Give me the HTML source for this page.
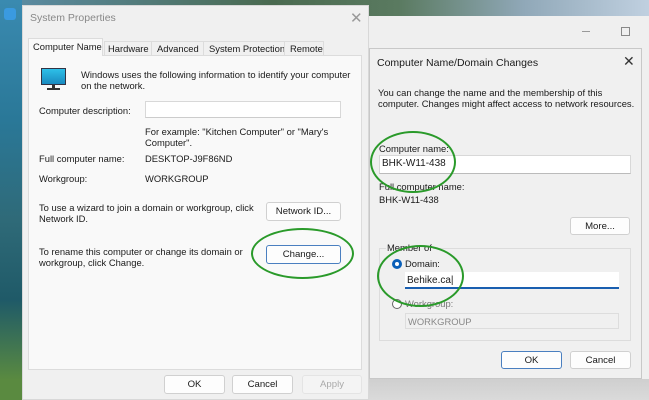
<!DOCTYPE html>
<html><head><style>
*{box-sizing:border-box;margin:0;padding:0}
body{width:649px;height:400px;overflow:hidden;position:relative;font-family:"Liberation Sans",sans-serif;font-size:9.4px;color:#1a1a1a;background:linear-gradient(90deg,#2d7a9a,#4a8fb0 30%,#6a8a70 60%,#8aa0b0 80%,#b8c8d8)}
.a{position:absolute}
.t{position:absolute;white-space:nowrap}
.btn{position:absolute;background:#fdfdfd;border:1px solid #d0d0d0;border-radius:3px;text-align:center;line-height:17px;font-size:9.6px}
.inp{position:absolute;background:#fff;border:1px solid #d8d8d8;border-bottom:1px solid #9a9a9a}
.ell{position:absolute;border:2.5px solid #2a9a2a;border-radius:50%}
</style></head><body>
<div class="a" style="left:0;top:0;width:22px;height:400px;background:linear-gradient(180deg,#3a8ab0,#2a7898 30%,#2f6a78 55%,#1f5a68 75%,#5a8a40 95%)"></div>
<div class="a" style="left:4px;top:8px;width:12px;height:12px;background:#3a9ae0;border-radius:3px"></div>
<div class="a" style="left:22px;top:0;width:627px;height:16px;background:linear-gradient(90deg,#5a8aa0,#4a6a50 40%,#5a7a60 60%,#90a8b8 80%,#c0d0e0)"></div>
<div class="a" style="left:366px;top:16px;width:283px;height:384px;background:#efefef"></div>
<div class="a" style="left:582px;top:31px;width:8px;height:1px;background:#999"></div>
<div class="a" style="left:621px;top:27px;width:9px;height:9px;border:1px solid #888"></div>
<div class="a" style="left:22px;top:5px;width:347px;height:395px;background:#f0f0f0;border:1px solid #d8d8d8"></div>
<div class="t" style="left:30px;top:12px;font-size:10.5px;color:#888">System Properties</div>
<div class="t" style="left:350px;top:9px;font-size:15px;color:#999">✕</div>
<div class="a" style="left:28px;top:55px;width:334px;height:315px;background:#f9f9f9;border:1px solid #dcdcdc"></div>
<div class="a" style="left:28px;top:38px;width:75px;height:18px;background:#f9f9f9;border:1px solid #dcdcdc;border-bottom:none"></div>
<div class="t" style="left:33px;top:41px">Computer Name</div>
<div class="a" style="left:104px;top:41px;width:220px;height:14px;background:#f0f0f0;border:1px solid #dcdcdc;border-bottom:none"></div>
<div class="t" style="left:108px;top:43px">Hardware</div>
<div class="a" style="left:151px;top:41px;width:1px;height:14px;background:#dcdcdc"></div>
<div class="t" style="left:157px;top:43px">Advanced</div>
<div class="a" style="left:203px;top:41px;width:1px;height:14px;background:#dcdcdc"></div>
<div class="t" style="left:209px;top:43px">System Protection</div>
<div class="a" style="left:284px;top:41px;width:1px;height:14px;background:#dcdcdc"></div>
<div class="t" style="left:290px;top:43px">Remote</div>
<div class="a" style="left:41px;top:68px;width:25px;height:17px;background:linear-gradient(#2ec0e8,#1a8ac0);border:1px solid #334"></div>
<div class="a" style="left:52px;top:85px;width:3px;height:3px;background:#333"></div>
<div class="a" style="left:47px;top:88px;width:13px;height:2px;background:#333"></div>
<div class="t" style="left:81px;top:69px;line-height:11px">Windows uses the following information to identify your computer<br>on the network.</div>
<div class="t" style="left:39px;top:105px">Computer description:</div>
<div class="inp" style="left:145px;top:101px;width:196px;height:17px;border-bottom-color:#ccc"></div>
<div class="t" style="left:145px;top:126px;line-height:11px">For example: "Kitchen Computer" or "Mary's<br>Computer".</div>
<div class="t" style="left:39px;top:153px">Full computer name:</div>
<div class="t" style="left:145px;top:153px">DESKTOP-J9F86ND</div>
<div class="t" style="left:39px;top:173px">Workgroup:</div>
<div class="t" style="left:145px;top:173px">WORKGROUP</div>
<div class="t" style="left:39px;top:202px;line-height:11px">To use a wizard to join a domain or workgroup, click<br>Network ID.</div>
<div class="btn" style="left:266px;top:202px;width:75px;height:19px">Network ID...</div>
<div class="t" style="left:39px;top:246px;line-height:11px">To rename this computer or change its domain or<br>workgroup, click Change.</div>
<div class="btn" style="left:266px;top:245px;width:75px;height:19px;border-color:#4a7fc0">Change...</div>
<div class="ell" style="left:251px;top:228px;width:103px;height:51px"></div>
<div class="btn" style="left:164px;top:375px;width:61px;height:19px">OK</div>
<div class="btn" style="left:232px;top:375px;width:61px;height:19px">Cancel</div>
<div class="btn" style="left:302px;top:375px;width:60px;height:19px;color:#aaa;background:#f4f4f4;border-color:#e4e4e4">Apply</div>
<div class="a" style="left:369px;top:379px;width:280px;height:21px;background:linear-gradient(#cfcfcf,#dadada)"></div>
<div class="a" style="left:369px;top:48px;width:273px;height:331px;background:#f0f0f0;border:1px solid #c8c8c8"></div>
<div class="t" style="left:377px;top:57px;font-size:10.5px">Computer Name/Domain Changes</div>
<div class="t" style="left:623px;top:53px;font-size:14px;color:#333">✕</div>
<div class="t" style="left:378px;top:87px;line-height:11px">You can change the name and the membership of this<br>computer. Changes might affect access to network resources.</div>
<div class="t" style="left:379px;top:143px">Computer name:</div>
<div class="inp" style="left:379px;top:155px;width:252px;height:19px;border-bottom-color:#bbb"></div>
<div class="t" style="left:382px;top:158px;font-size:10px">BHK-W11-438</div>
<div class="t" style="left:379px;top:181px">Full computer name:</div>
<div class="t" style="left:379px;top:194px">BHK-W11-438</div>
<div class="btn" style="left:570px;top:217px;width:60px;height:18px">More...</div>
<div class="a" style="left:379px;top:248px;width:252px;height:93px;border:1px solid #dcdcdc"></div>
<div class="t" style="left:386px;top:242px;background:#f0f0f0;padding:0 1px">Member of</div>
<div class="a" style="left:392px;top:259px;width:10px;height:10px;border-radius:50%;border:3px solid #0a5fb8;background:#fff"></div>
<div class="t" style="left:405px;top:258px">Domain:</div>
<div class="a" style="left:405px;top:272px;width:214px;height:17px;background:#fff;border-bottom:2px solid #1a5fb0"></div>
<div class="t" style="left:407px;top:275px;font-size:10px">Behike.ca|</div>
<div class="a" style="left:392px;top:299px;width:10px;height:10px;border-radius:50%;border:1px solid #666;background:#fff"></div>
<div class="t" style="left:405px;top:298px;color:#777">Workgroup:</div>
<div class="a" style="left:405px;top:313px;width:214px;height:16px;background:#f0f0f0;border:1px solid #ddd"></div>
<div class="t" style="left:408px;top:316px;color:#888">WORKGROUP</div>
<div class="btn" style="left:501px;top:351px;width:61px;height:18px;border-color:#4a7fc0">OK</div>
<div class="btn" style="left:570px;top:351px;width:61px;height:18px">Cancel</div>
<div class="ell" style="left:370px;top:131px;width:86px;height:62px"></div>
<div class="ell" style="left:377px;top:245px;width:87px;height:62px"></div>
</body></html>
